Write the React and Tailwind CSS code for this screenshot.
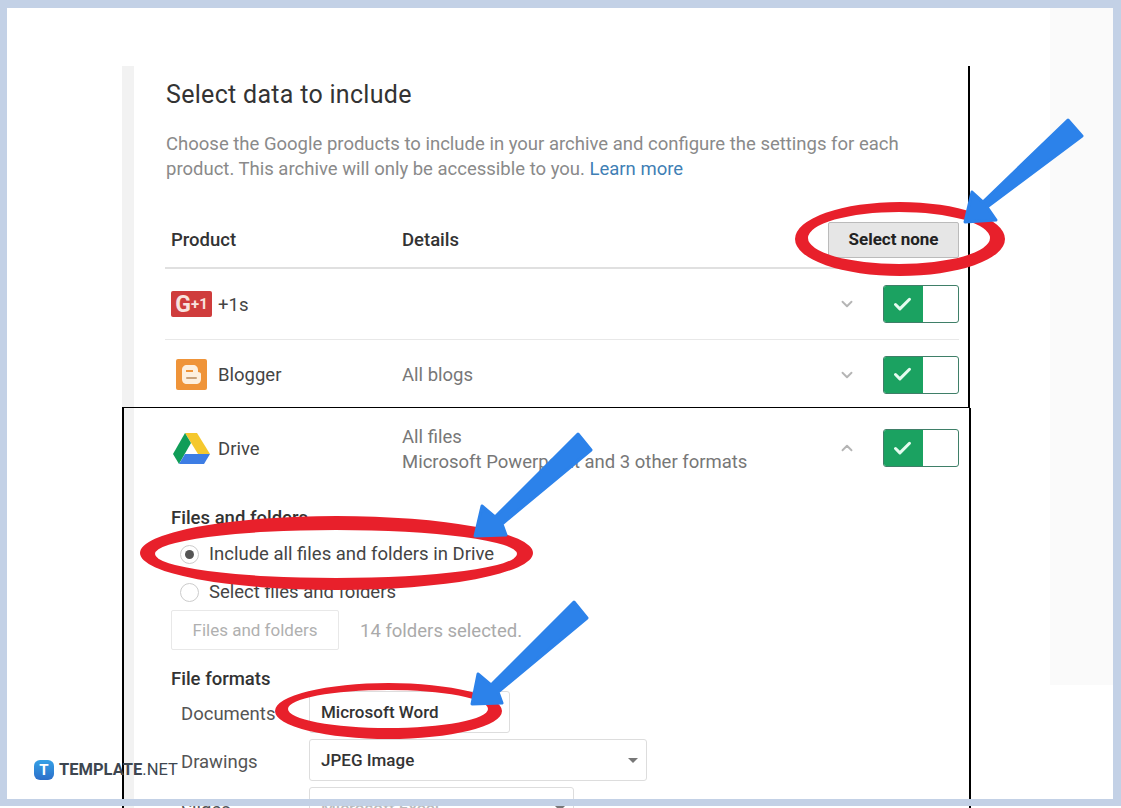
import React from "react";
import { Check, ChevronDown, ChevronUp } from "lucide-react";

const Toggle = () => (
  <div className="flex h-[38px] w-[76px] overflow-hidden rounded-[3px] border border-[#3f7f68] bg-white">
    <div className="flex w-[39px] items-center justify-center bg-[#1ba261]">
      <Check className="mr-[2px] h-[21px] w-[21px] text-[#e4fbef]" strokeWidth={3.5} />
    </div>
  </div>
);

const GoogleOne = () => (
  <div className="flex h-[26px] w-[41px] items-center justify-center rounded-[2px] bg-[#cf3c3c] font-bold leading-none text-[#f8e3df]">
    <span className="text-[23px]">G</span>
    <span className="text-[15px]">+1</span>
  </div>
);

const BloggerIcon = () => (
  <svg width="31" height="31" viewBox="0 0 31 31" className="ml-[5px] mr-[5px]">
    <rect width="31" height="31" rx="2" fill="#ef9439" />
    <path
      d="M11 6h6c3 0 5 2 5 5v2c2 0 3 1 3 2v5c0 3-2 5-5 5h-9c-3 0-5-2-5-5v-9c0-3 2-5 5-5z"
      fill="#fdf0df"
    />
    <rect x="10" y="11" width="7" height="2" fill="#ef9439" />
    <rect x="10" y="18" width="11" height="2" rx="1" fill="#c9a27a" />
  </svg>
);

const DriveIcon = () => (
  <svg width="37" height="33" viewBox="0 0 37 33" className="ml-[2px] mr-[2px]">
    <path d="M12 1h12l13 21H25z" fill="#f5c82e" />
    <path d="M12 1l6 10-12 21-6-10z" fill="#109d58" />
    <path d="M12 22h25l-6 10H6z" fill="#3d7de4" />
  </svg>
);

const ProductRow = ({ icon, name, details, open, height }) => (
  <div className={`flex items-center ${height}`}>
    <div className="flex w-[237px] items-center gap-[6px] pl-[6px] text-[18.5px] text-[#444]">
      {icon}
      <span className="pt-[3px]">{name}</span>
    </div>
    <div className="flex-1 pt-[3px] text-[18.5px] text-[#777]">{details}</div>
    {open ? (
      <ChevronUp className="mr-[27px] h-[18px] w-[18px] text-[#b5b5b5]" strokeWidth={2.5} />
    ) : (
      <ChevronDown className="mr-[27px] h-[18px] w-[18px] text-[#b5b5b5]" strokeWidth={2.5} />
    )}
    <Toggle />
  </div>
);

const Radio = ({ checked, children }) => (
  <div className="flex h-[38px] items-center gap-[10px] pl-[9px] text-[18.5px] text-[#444]">
    <div className="flex h-[19px] w-[19px] items-center justify-center rounded-full border border-[#ccc] bg-white">
      {checked && <div className="h-[9px] w-[9px] rounded-full bg-[#555]" />}
    </div>
    <span className="pt-[2px]">{children}</span>
  </div>
);

const Select = ({ label, value, width, caret, muted }) => (
  <div className="flex h-[42px] items-center pl-[10px]">
    <div className="w-[128px] pt-[5px] text-[18.5px] text-[#555]">{label}</div>
    <div
      className={`flex h-[42px] items-center justify-between rounded-[3px] border border-[#ddd] bg-white pl-[11px] pr-[8px] text-[17px] font-medium ${width} ${muted ? "text-[#bbb]" : "text-[#333]"}`}
    >
      <span className="pt-[1px]">{value}</span>
      {caret && <div className="h-0 w-0 border-x-[5px] border-t-[5px] border-x-transparent border-t-[#777]" />}
    </div>
  </div>
);

const Marks = () => (
  <svg
    width="1121"
    height="808"
    viewBox="0 0 1121 808"
    className="pointer-events-none absolute left-0 top-0"
  >
    <g fill="#e8202b" fillRule="evenodd">
      <path d="M795 239a105 37 0 1 0 210 0a105 37 0 1 0-210 0zM808 238a91 26 0 1 1 182 0a91 26 0 1 1-182 0z" />
      <path d="M140 553a196.500 37 0 1 0 393 0a196.500 37 0 1 0-393 0zM155 554a181 24 0 1 1 362 0a181 24 0 1 1-362 0z" />
      <path d="M275 711a113.500 28 0 1 0 227 0a113.500 28 0 1 0-227 0zM288 709a100 19 0 1 1 200 0a100 19 0 1 1-200 0z" />
    </g>
    <g fill="#2c82ea" stroke="#2c82ea" strokeWidth="3" strokeLinejoin="round">
      <path d="M1068 120L1082 136L987 207L996 220L965 222L972 192L983 202z" />
      <path d="M578 434L591 450L502 524L506 535L475 536L482 506L495 517z" />
      <path d="M574 602L587 618L498 692L502 703L472 704L478 674L491 685z" />
    </g>
  </svg>
);

const Logo = () => (
  <div className="absolute left-[34px] top-[760px] flex items-center gap-[5px]">
    <div className="flex h-[20px] w-[20px] items-center justify-center rounded-[6px] bg-gradient-to-b from-[#35a0e6] to-[#2d6fc9] text-[15px] font-bold leading-none text-white">
      T
    </div>
    <div className="text-[16.500px] leading-none text-[#3d4650]">
      <span className="font-bold">TEMPLATE</span>
      <span>.NET</span>
    </div>
  </div>
);

export default function App() {
  return (
    <div
      className="relative h-[808px] w-[1121px] overflow-hidden bg-white"
      style={{ fontFamily: "Roboto, sans-serif" }}
    >
      <div className="absolute bottom-[123px] right-0 top-0 w-[71px] bg-[#fafafa]" />
      <div className="relative pl-[122px] pt-[66px]">
        {/* top part of the page */}
        <div className="h-[342px] w-[848px] border-b border-r-2 border-black">
          <div className="h-full border-l-[12px] border-[#f2f2f2] bg-white pl-[31px] pr-[9px]">
            <h1 className="ml-[1px] pt-[12px] text-[25px] font-normal leading-[34px] tracking-[0.3px] text-[#333]">
              Select data to include
            </h1>
            <p className="ml-[1px] mt-[20px] text-[18.5px] leading-[25px] text-[#8a8a8a]">
              Choose the Google products to include in your archive and configure the settings for each
              <br />
              product. This archive will only be accessible to you.{" "}
              <span className="text-[#3f7fb5]">Learn more</span>
            </p>
            <div className="mt-[31px] flex h-[56px] items-center border-b-2 border-[#e0e0e0] text-[18.5px] font-medium text-[#333]">
              <div className="w-[237px] pl-[6px] pt-[2px]">Product</div>
              <div className="flex-1 pt-[2px]">Details</div>
              <div className="flex h-[36px] w-[131px] items-center justify-center rounded-[2px] border border-[#bbb] bg-[#e6e6e6] text-[17px] font-bold text-[#222]">
                Select none
              </div>
            </div>
            <div className="border-b border-[#e8e8e8]">
              <ProductRow icon={<GoogleOne />} name="+1s" height="h-[70px]" />
            </div>
            <div className="pt-[2px]">
              <ProductRow icon={<BloggerIcon />} name="Blogger" details="All blogs" height="h-[65px]" />
            </div>
          </div>
        </div>

        {/* Drive, expanded */}
        <div className="h-[420px] w-[849px] border-x-2 border-black">
          <div className="h-full border-l-[10px] border-[#f2f2f2] bg-white pl-[31px] pr-[10px]">
            <ProductRow
              icon={<DriveIcon />}
              name="Drive"
              details={
                <div className="pt-[1px] leading-[25px]">
                  All files
                  <br />
                  Microsoft Powerpoint and 3 other formats
                </div>
              }
              open
              height="h-[80px]"
            />
            <div className="pl-[6px]">
              <div className="mt-[18px] text-[18.5px] font-medium leading-[24px] text-[#333]">Files and folders</div>
              <div className="mt-[5px]">
                <Radio checked>Include all files and folders in Drive</Radio>
                <Radio>Select files and folders</Radio>
              </div>
              <div className="-mt-[1px] flex items-center gap-[21px]">
                <div className="flex h-[40px] w-[168px] items-center justify-center rounded-[2px] border border-[#e8e8e8] pt-[2px] text-[17px] text-[#b0b0b0]">
                  Files and folders
                </div>
                <span className="pt-[3px] text-[18.5px] text-[#aaa]">14 folders selected.</span>
              </div>
              <div className="mt-[17px] text-[18.5px] font-medium leading-[24px] text-[#333]">File formats</div>
              <div className="flex flex-col gap-[6px]">
                <Select label="Documents" value="Microsoft Word" width="w-[201px]" />
                <Select label="Drawings" value="JPEG Image" width="w-[338px]" caret />
                <Select label="Slides" value="Microsoft Excel" width="w-[265px]" caret muted />
              </div>
            </div>
          </div>
        </div>
      </div>

      <Marks />
      <Logo />
      {/* slide frame, the page shows again in the last rows below it */}
      <div className="pointer-events-none absolute left-0 right-0 top-0 h-[806px] border-b-[7px] border-l-[7px] border-r-[8px] border-t-[8px] border-[#c3d1e6]" />
    </div>
  );
}
